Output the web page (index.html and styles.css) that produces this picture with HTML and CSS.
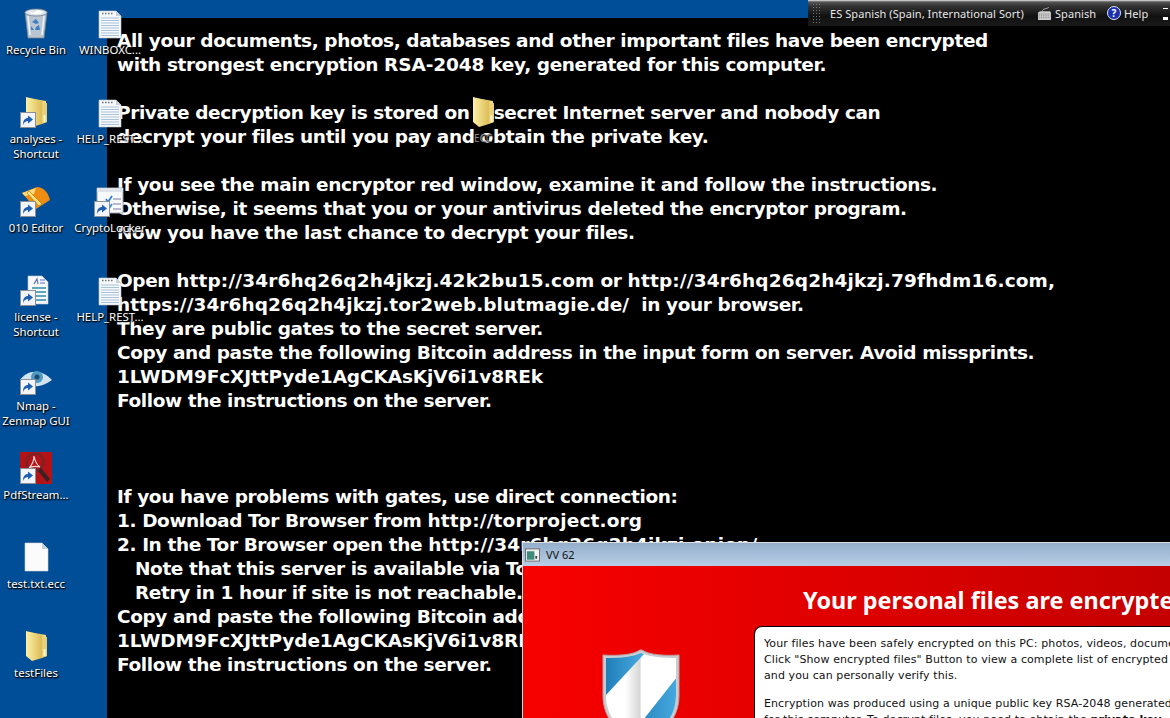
FILE: index.html
```html
<!DOCTYPE html>
<html lang="en">
<head>
<meta charset="utf-8">
<title>Desktop</title>
<link rel="stylesheet" href="styles.css">
</head>
<body>
<svg class="defs" width="0" height="0" aria-hidden="true">
  <defs>
    <linearGradient id="fold" x1="0" y1="0" x2="1" y2="0"><stop offset="0" stop-color="#fdf0a8"/><stop offset="1" stop-color="#dcbc55"/></linearGradient>
    <linearGradient id="foldb" x1="0" y1="0" x2="1" y2="0"><stop offset="0" stop-color="#c9a94a"/><stop offset="1" stop-color="#f4e08e"/></linearGradient>
    <symbol id="doc" viewBox="0 0 32 32">
      <path d="M5 4h17l5 5v22H5z" fill="#f6f8fb" stroke="#c4cad2" stroke-width=".6"/>
      <path d="M22 4v5h5z" fill="#c9d0d8"/>
      <path d="M8 6.500h1.500M11 6.500h1.500M14 6.500h1.500M17 6.500h1.500" stroke="#6a7078" stroke-width="1.300"/>
      <path d="M7 11h18M7 13.500h18M7 16h18M7 18.500h18M7 21h18M7 23.500h18M7 26h18M7 28.500h18" stroke="#a9c3da" stroke-width="1"/>
    </symbol>
    <symbol id="folder" viewBox="0 0 32 32">
      <path d="M9 2l17 3v2l1 1v18l-15 4z" fill="url(#foldb)"/>
      <path d="M6 1l16 4v23l-10 3-6-5z" fill="url(#fold)"/>
      <path d="M22 8l5-1v19l-5 2z" fill="#e9d078"/>
      <rect x="23.500" y="19" width="2" height="7" fill="#fff8d0"/>
    </symbol>
    <symbol id="arrow" viewBox="0 0 16 16">
      <rect x=".5" y=".5" width="15" height="15" fill="#f2f4f7" stroke="#8b8f96"/>
      <path d="M3 13c0-5 2-7 5-7V3.500l5 4-5 4V9c-2 0-4 1-5 4z" fill="#1d5fb0"/>
    </symbol>
  </defs>
</svg>

<main class="desktop">
  <section class="note">
    <p>All your documents, photos, databases and other important files have been encrypted</p>
    <p>with strongest encryption <span class="addr">RSA-2048</span> key, generated for this computer.</p>
    <p class="gap">Private decryption key is stored on a secret Internet server and nobody can</p>
    <p>decrypt your files until you pay and obtain the private key.</p>
    <p class="gap">If you see the main encryptor red window, examine it and follow the instructions.</p>
    <p>Otherwise, it seems that you or your antivirus deleted the encryptor program.</p>
    <p>Now you have the last chance to decrypt your files.</p>
    <p class="gap">Open <span class="url">http://34r6hq26q2h4jkzj.42k2bu15.com</span> or <span class="url">http://34r6hq26q2h4jkzj.79fhdm16.com,</span></p>
    <p><span class="url2">https://34r6hq26q2h4jkzj.tor2web.blutmagie.de/</span>&nbsp; in your browser.</p>
    <p>They are public gates to the secret server.</p>
    <p>Copy and paste the following Bitcoin address in the input form on server. Avoid missprints.</p>
    <p class="addr">1LWDM9FcXJttPyde1AgCKAsKjV6i1v8REk</p>
    <p>Follow the instructions on the server.</p>
    <p class="gap3">If you have problems with gates, use direct connection:</p>
    <p>1. Download Tor Browser from <span class="url">http://torproject.org</span></p>
    <p>2. In the Tor Browser open the <span class="url">http://34r6hq26q2h4jkzj.onion/</span></p>
    <p class="ind">Note that this server is available via Tor Browser only.</p>
    <p class="ind">Retry in 1 hour if site is not reachable.</p>
    <p>Copy and paste the following Bitcoin address in the input form on server. Avoid missprints.</p>
    <p class="addr">1LWDM9FcXJttPyde1AgCKAsKjV6i1v8REk</p>
    <p>Follow the instructions on the server.</p>
  </section>

  <div class="icons">
    <div class="ico"><svg class="g" viewBox="0 0 32 32"><path d="M5 5h22l-3 26H8z" fill="#b9c6d2" stroke="#6f7f8c" stroke-width=".8"/><ellipse cx="16" cy="5.500" rx="11" ry="3.500" fill="#dfe7ee" stroke="#6f7f8c" stroke-width=".8"/><path d="M9 4l4 2 5-3 5 2-3 2H12z" fill="#fff"/><path d="M12 15l4-3 3 4-3 1zM19 18l1 5-5 0 1-3zM11 19l3 4-3 0z" fill="#3f7fc4"/><path d="M8 9l2 19M24 9l-2 19" stroke="#eef3f7" stroke-width="1.500"/></svg><span>Recycle Bin</span></div>
    <div class="ico"><span class="wrap"><svg class="g"><use href="#folder"/></svg><svg class="sc"><use href="#arrow"/></svg></span><span>analyses -<br>Shortcut</span></div>
    <div class="ico"><span class="wrap"><svg class="g" viewBox="0 0 32 32"><path d="M2 8l15-6c6 0 11 5 13 13l-14 9z" fill="#ef8c12"/><path d="M2 8l14-5-2 6-9 2z" fill="#f8d878"/><path d="M9 6l13 13-3 2L7 8z" fill="#f7e27a" stroke="#a87310" stroke-width=".6"/></svg><svg class="sc"><use href="#arrow"/></svg></span><span>010 Editor</span></div>
    <div class="ico"><span class="wrap"><svg class="g" viewBox="0 0 32 32"><path d="M8 2h14l6 6v22H8z" fill="#f6f8fb" stroke="#c4cad2" stroke-width=".6"/><path d="M14 10l3-5 1 5M20 6h5M20 9h5" stroke="#5b6fc4" stroke-width="1.200" fill="none"/><path d="M12 14h14M12 18h14M12 22h14M12 26h14" stroke="#5fa8b8" stroke-width="2"/></svg><svg class="sc"><use href="#arrow"/></svg></span><span>license -<br>Shortcut</span></div>
    <div class="ico"><span class="wrap"><svg class="g" viewBox="0 0 32 32"><path d="M0 17C6 8 20 4 32 17c-8 6-16 7-19 6z" fill="#cfe4f0"/><circle cx="17" cy="14" r="6" fill="#4f9ac2"/><circle cx="17" cy="14" r="2.500" fill="#1b4a6b"/></svg><svg class="sc"><use href="#arrow"/></svg></span><span>Nmap -<br>Zenmap GUI</span></div>
    <div class="ico"><span class="wrap"><svg class="g" viewBox="0 0 32 32"><rect width="32" height="32" fill="#b31217"/><circle cx="15" cy="10" r="8.500" fill="none" stroke="#7d2226" stroke-width="2.500"/><path d="M21 16l9 11-3 3-9-11z" fill="#3c2024"/><path d="M9 16c3-3 5-8 5-12 1 5 3 9 6 11-4-1-8-1-11 1z" fill="none" stroke="#f3d6d6" stroke-width="1.200"/></svg><svg class="sc"><use href="#arrow"/></svg></span><span>PdfStream...</span></div>
    <div class="ico"><svg class="g" viewBox="0 0 32 32"><path d="M5 2h17l6 6v22H5z" fill="#fbfbfb" stroke="#cfd3d8" stroke-width=".6"/><path d="M22 2v6h6z" fill="#c9cfd6"/></svg><span>test.txt.ecc</span></div>
    <div class="ico"><svg class="g"><use href="#folder"/></svg><span>testFiles</span></div>
    <div class="ico"><svg class="g"><use href="#doc"/></svg><span>WINBOXC...</span></div>
    <div class="ico"><svg class="g"><use href="#doc"/></svg><span>HELP_REST...</span></div>
    <div class="ico"><span class="wrap"><svg class="g" viewBox="0 0 32 32"><path d="M3 3h26v25H3z" fill="#f8f9fb" stroke="#9aa2ac"/><path d="M3 3h26v4H3z" fill="#dfe4ea"/><path d="M12 14l2 3 4-6" stroke="#2c7fd0" stroke-width="1.800" fill="none"/><path d="M12 22l2 3 4-6" stroke="#3f8fd0" stroke-width="1.800" fill="none"/><path d="M19 14h8M19 19h8M19 24h8" stroke="#7d76a8" stroke-width="1"/></svg><svg class="sc"><use href="#arrow"/></svg></span><span>CryptoLocker</span></div>
    <div class="ico"><svg class="g"><use href="#doc"/></svg><span>HELP_REST...</span></div>
  </div>

  <div class="ico ecc"><svg class="g"><use href="#folder"/></svg><span>ECC</span></div>
</main>

<aside class="langbar">
  <span class="grip"></span>
  <span class="lang">ES Spanish (Spain, International Sort)</span>
  <span class="kb">
    <svg class="kbi" viewBox="0 0 14 14"><path d="M1 6l2-1h9l1 1v7H1z" fill="#cfcfcf"/><path d="M2 7.500h10M2 9.200h10M2 11h10" stroke="#777" stroke-width=".8" stroke-dasharray="1 .7"/><path d="M5 5C5 2 10 3 11 1" stroke="#c4c4c4" stroke-width=".8" fill="none"/></svg>
    Spanish
  </span>
  <span class="help"><i class="q">?</i>Help</span>
  <span class="more"></span>
</aside>

<section class="win">
  <header class="win-title">
    <svg class="win-ico" viewBox="0 0 16 14"><rect x=".5" y=".5" width="15" height="13" fill="#f1f1f1" stroke="#6a6a6a"/><rect x="2" y="3" width="8" height="9" fill="#3f8a78"/><rect x="11" y="8" width="2" height="3" fill="#444"/></svg>
    <span>VV 62</span>
  </header>
  <div class="win-body">
    <h1>Your personal files are encrypted</h1>
    <div class="win-main">
      <div class="shield-col">
        <svg class="shield" viewBox="0 0 80 90">
          <defs>
            <linearGradient id="sb" x1="0" y1="0" x2="1" y2="0"><stop offset="0" stop-color="#1b78b3"/><stop offset="1" stop-color="#4aade2"/></linearGradient>
            <linearGradient id="sw" x1="0" y1="0" x2="1" y2="0"><stop offset=".3" stop-color="#ffffff"/><stop offset=".49" stop-color="#d6d6d6"/><stop offset=".5" stop-color="#fff"/></linearGradient>
            <clipPath id="sc"><path d="M5 5C18 5 32 4 40 0c8 4 22 5 35 5v38c0 24-18 38-35 47C23 81 5 67 5 43z"/></clipPath>
          </defs>
          <path d="M2 2C16 3 32 2 39 -3h2c7 5 23 6 37 5v41c0 26-20 40-38 50C22 83 2 69 2 43z" fill="#c9cdd1" stroke="#b9a0a0" stroke-width="1"/>
          <g clip-path="url(#sc)">
            <rect width="80" height="90" fill="url(#sw)"/>
            <path d="M0 0h44L5 42H0z" fill="url(#sb)"/>
            <path d="M80 19V90H24z" fill="url(#sb)"/>
          </g>
        </svg>
      </div>
      <div class="panel">
        <p>Your files have been safely encrypted on this PC: photos, videos, documents, etc.</p>
        <p>Click "Show encrypted files" Button to view a complete list of encrypted files,</p>
        <p>and you can personally verify this.</p>
        <p class="pgap">Encryption was produced using a unique public key RSA-2048 generated</p>
        <p>for this computer. To decrypt files, you need to obtain the <b>private key</b>.</p>
      </div>
    </div>
  </div>
</section>
</body>
</html>
```
FILE: styles.css
```css
* { box-sizing: border-box; }
html, body { margin: 0; padding: 0; height: 718px; overflow: hidden; }
body { position: relative; width: 1170px; font-family: "Noto Sans", sans-serif; background: #004e98; }
p { margin: 0; }
.defs { position: absolute; }

.desktop { height: 718px; padding: 18px 0 0 107px; background: #004e98; }
.note { height: 700px; background: #000; padding: 11px 0 0 10px; color: #fff; font-family: "DejaVu Sans", sans-serif; font-weight: 700; font-size: 18.5px; letter-spacing: -0.4px; line-height: 24px; white-space: nowrap; overflow: hidden; }
.note .gap { margin-top: 24px; }
.note .gap3 { margin-top: 72px; }
.note .ind { padding-left: 18px; }
.note .url { letter-spacing: .15px; }
.note .url2 { letter-spacing: .06px; }
.note .addr { letter-spacing: -.1px; }

.icons { position: absolute; left: 0; top: 7px; display: grid; grid-auto-flow: column; grid-template-rows: repeat(8, 89px); grid-template-columns: 74px 76px; }
.ico { width: 72px; display: flex; flex-direction: column; align-items: center; color: #fff; font-size: 11.4px; line-height: 15px; text-align: center; text-shadow: 0 1px 2px #000, 1px 1px 1px #000; white-space: nowrap; }
.ico .g { display: block; width: 32px; height: 32px; flex: none; }
.ico > span:last-child { margin-top: 3px; }
.wrap { position: relative; display: block; width: 32px; height: 32px; }
.sc { position: absolute; left: 0; bottom: 0; width: 16px; height: 16px; }
.ecc { position: absolute; left: 447px; top: 96px; }
.ecc > span:last-child { color: #888; font-size: 10px; }

.langbar { position: absolute; right: 0; top: 0; width: 362px; height: 26px; display: flex; align-items: center; padding-left: 4px; color: #e8e8e8; font-size: 11px; letter-spacing: .07px; background: linear-gradient(#e6e6e6 0, #555 2px, #333 6px, #111 16px, #1a1a1a 26px); }
.grip { width: 8px; height: 20px; margin-right: 10px; background-image: radial-gradient(#777 40%, transparent 45%); background-size: 3px 3px; }
.lang { width: 207px; }
.kb { display: flex; align-items: center; gap: 3px; width: 70px; }
.kbi { width: 15px; height: 15px; }
.help { display: flex; align-items: center; gap: 3px; }
.q { width: 14px; height: 14px; border-radius: 50%; background: #1a2fb0; border: 1px solid #dfe6f5; color: #fff; font-style: normal; font-weight: 700; font-size: 10px; line-height: 12px; text-align: center; }
.more { position: absolute; right: 2px; top: 8px; width: 5px; height: 12px; border-top: 1px solid #fff; border-bottom: 3px solid #fff; }

.win { position: absolute; left: 522px; top: 542px; width: 648px; height: 176px; border-top: 1px solid #ddd; border-left: 1px solid #ddd; overflow: hidden; }
.win-title { height: 23px; display: flex; align-items: center; gap: 6px; padding-left: 2px; background: linear-gradient(#94aecb, #b8cee6); color: #111; font-size: 11px; }
.win-ico { width: 15px; height: 14px; }
.win-body { height: 152px; padding-top: 22px; background: linear-gradient(90deg, #f80000, #c40000); }
.win-body h1 { margin: 0 0 0 280px; color: #fff; font-size: 23.4px; line-height: 24px; font-weight: 700; white-space: nowrap; }
.win-main { display: flex; margin-top: 14px; }
.shield-col { width: 231px; padding: 27px 0 0 78px; flex: none; }
.shield { display: block; width: 80px; height: 90px; overflow: visible; }
.panel { flex: 1; height: 120px; padding: 9px 0 0 9px; background: #fff; border-top: 1px solid #000; border-left: 1px solid #000; border-top-left-radius: 8px; color: #111; font-family: "DejaVu Sans", sans-serif; font-size: 11px; letter-spacing: .1px; line-height: 16px; white-space: nowrap; }
.panel .pgap { margin-top: 12px; }
```
